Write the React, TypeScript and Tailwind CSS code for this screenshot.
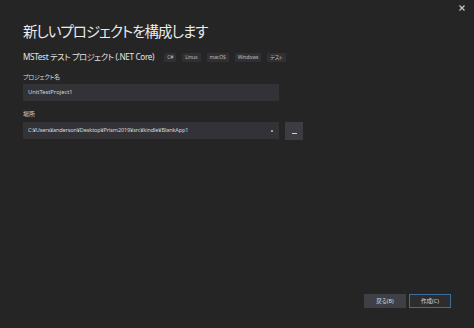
const FONT = "font-['Noto_Sans','Noto_Sans_CJK_JP',sans-serif]";

const tags = ["C#", "Linux", "macOS", "Windows", "テスト"];

export default function App() {
  return (
    <div
      className={`w-[474px] h-[328px] bg-[#252526] text-[#d4d4d4] flex flex-col overflow-hidden ${FONT} [font-feature-settings:'palt']`}
    >
      <div className="flex justify-end pr-[9px] pt-[5px] h-[14px]">
        <svg width="6" height="6" viewBox="0 0 6 6">
          <path d="M0.5 0.5 L5.5 5.5 M5.5 0.5 L0.5 5.5" stroke="#c8c8c8" strokeWidth="1.2" />
        </svg>
      </div>

      <div className="px-[23px] flex flex-col">
        <h1 className="text-[14.5px] leading-[20px] mt-[7px] text-[#ececec] tracking-[-1px]">
          新しいプロジェクトを構成します
        </h1>

        <div className="flex items-center mt-[9px] h-[14px]">
          <span className="text-[8.2px] leading-[14px] text-[#e4e4e4] tracking-[-0.35px]">
            MSTest テスト プロジェクト (.NET Core)
          </span>
          <div className="flex items-center gap-[6px] ml-[10px]">
            {tags.map((t) => (
              <span
                key={t}
                className="bg-[#303034] text-[#bfbfbf] text-[5px] leading-[9px] h-[9px] px-[3px] rounded-[1px] tracking-[-0.1px]"
              >
                {t}
              </span>
            ))}
          </div>
        </div>

        <label className="text-[6px] leading-[9px] mt-[9px] text-[#d8d8d8] tracking-[-0.2px]">プロジェクト名</label>
        <div className="w-[256px] h-[17px] bg-[#333337] mt-[2px] flex items-center px-[5px] text-[5.8px] text-[#d6d6d6]">
          UnitTestProject1
        </div>

        <label className="text-[6px] leading-[9px] mt-[9px] text-[#d8d8d8]">場所</label>
        <div className="flex mt-[3px] gap-[6px]">
          <div className="w-[256px] h-[17px] bg-[#333337] flex items-center justify-between px-[5px] text-[5.6px] text-[#d6d6d6] tracking-[-0.15px]">
            <span>C:¥Users¥anderson¥Desktop¥Prism2019¥src¥kindle¥BlankApp1</span>
            <span className="w-[2px] h-[2px] bg-[#a0a0a0] mr-[1px]" />
          </div>
          <div className="w-[18px] h-[18px] bg-[#3c3c41] flex items-end justify-center pb-[6px]">
            <span className="w-[5px] h-[1px] bg-[#d0d0d0]" />
          </div>
        </div>
      </div>

      <div className="flex-1" />

      <div className="flex justify-end gap-[3px] pr-[23px] pb-[20px]">
        <button className="w-[42px] h-[14px] bg-[#3f3f46] text-[5.5px] text-[#dcdcdc] flex items-center justify-center">
          戻る(B)
        </button>
        <button className="w-[42px] h-[14px] bg-[#2d2d30] border border-[#3b6f9b] text-[5.5px] text-[#dcdcdc] flex items-center justify-center">
          作成(C)
        </button>
      </div>
    </div>
  );
}
